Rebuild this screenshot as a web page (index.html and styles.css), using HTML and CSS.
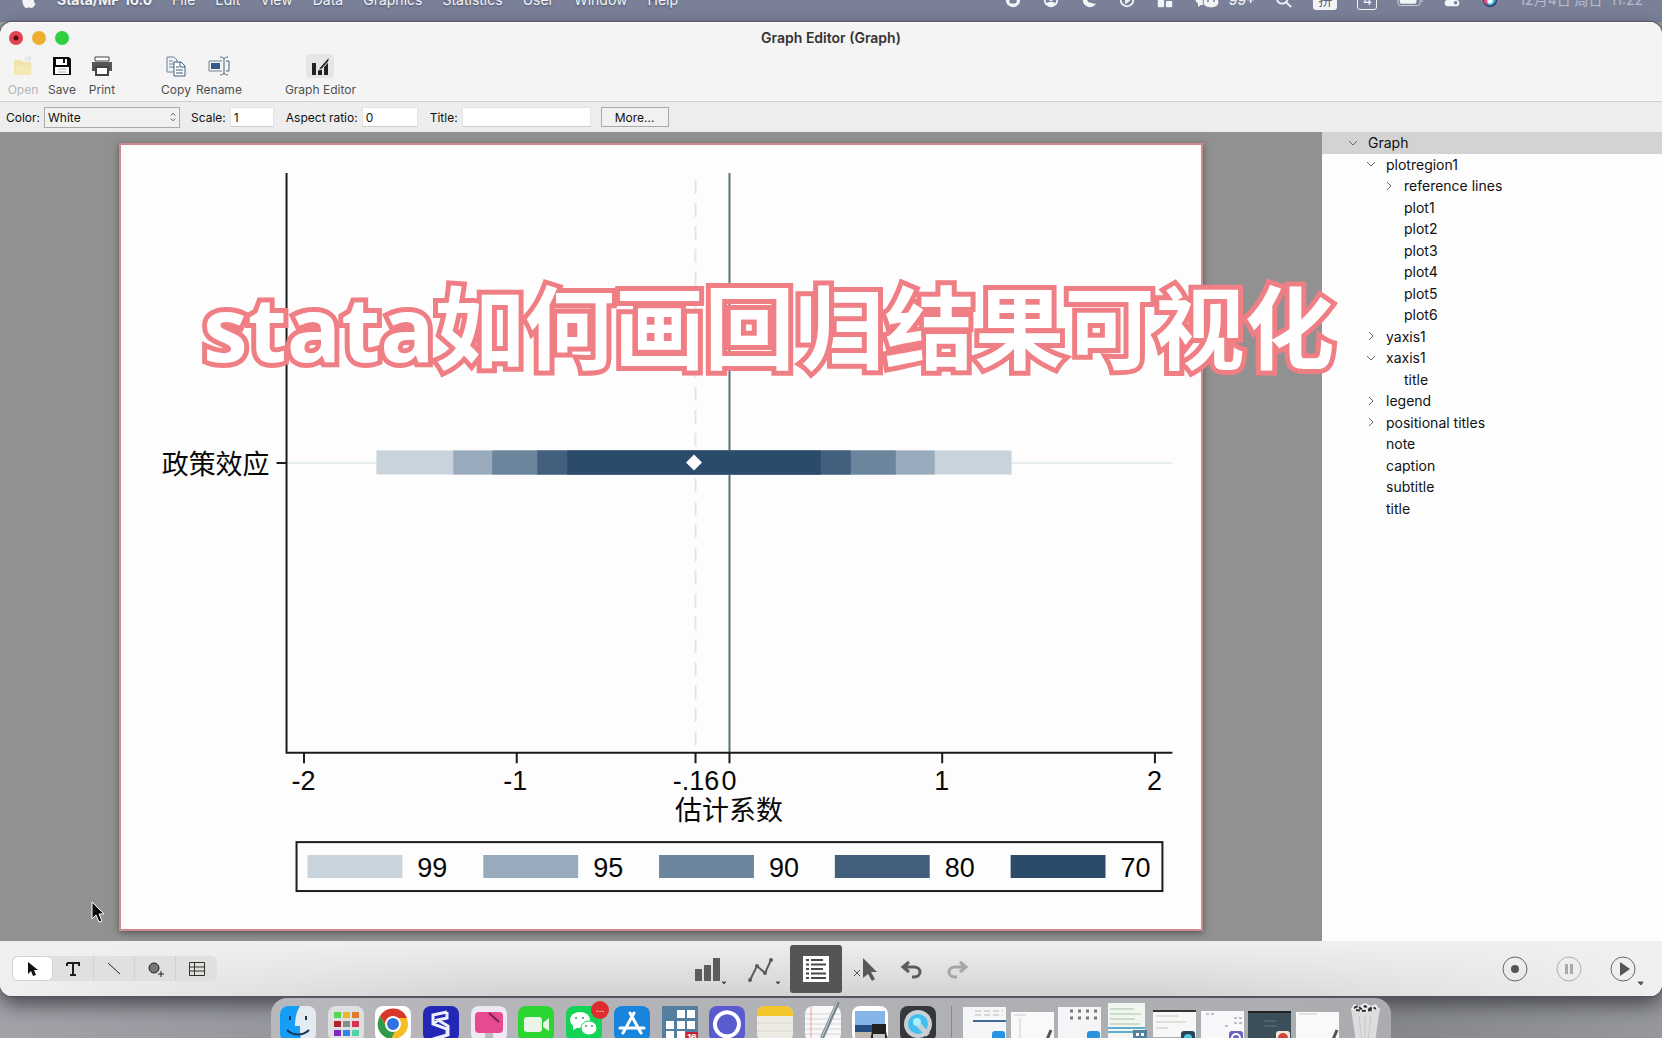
FILE: index.html
```html
<!DOCTYPE html>
<html lang="zh-CN">
<head>
<meta charset="utf-8">
<title>Graph Editor (Graph)</title>
<link rel="stylesheet" href="styles.css">
</head>
<body>
<div class="desktop">
  <header class="menubar">
    <nav class="menus">
      <svg class="apple" viewBox="0 0 18 20"><path d="M12 0c0 2-1.600 3.600-3.200 3.600C8.600 2 10 .3 12 0zM14.500 10.500c0-2 1.500-3 1.800-3.200C15 5.300 13 5 12 5c-1.200 0-2.200.7-3 .7S7.200 5 6 5C3.500 5 1.500 7 1.500 10.500 1.500 14.500 4 19 6 19c1 0 1.600-.7 3-.7s1.900.7 3 .7c1.700 0 3.500-2.700 4.300-5-1-.4-1.800-1.600-1.800-3.500z"/></svg>
      <a class="app-name" href="#">Stata/MP 16.0</a>
      <a href="#">File</a><a href="#">Edit</a><a href="#">View</a><a href="#">Data</a><a href="#">Graphics</a><a href="#">Statistics</a><a href="#">User</a><a href="#">Window</a><a href="#">Help</a>
    </nav>
    <div class="status">
      <svg viewBox="0 0 20 20"><circle cx="10" cy="10" r="8"/><rect class="cut" x="6" y="6" width="8" height="8" rx="2"/></svg>
      <svg viewBox="0 0 20 20"><circle class="line" cx="10" cy="10" r="7"/><circle cx="10" cy="8" r="3"/><path d="M4 15c2-4 10-4 12 0l-6 3z"/></svg>
      <svg viewBox="0 0 20 20"><path d="M12 2A8 8 0 1 0 18 14a7 7 0 0 1-6-12z"/><circle class="cut" cx="12" cy="9" r="4"/></svg>
      <svg viewBox="0 0 20 20"><circle class="line" cx="10" cy="10" r="7"/><path d="M8 6l6 4-6 5z"/></svg>
      <svg viewBox="0 0 20 20"><rect x="2" y="2" width="7" height="16" rx="1"/><rect x="11" y="11" width="7" height="7" rx="1"/><rect x="11" y="2" width="7" height="7" rx="1"/></svg>
      <span class="chat"><svg class="wide" viewBox="0 0 26 20"><ellipse cx="9" cy="8" rx="8" ry="7"/><path d="M4 13v4l4-3z"/><ellipse class="edge" cx="17" cy="12" rx="8" ry="6"/><circle class="cut" cx="14" cy="11" r="1"/><circle class="cut" cx="20" cy="11" r="1"/></svg><b>99+</b></span>
      <svg viewBox="0 0 20 20"><circle class="line" cx="8" cy="8" r="6"/><path class="line" d="M12 12l6 6"/></svg>
      <span class="ime">拼</span>
      <span class="ime hollow">4</span>
      <svg class="wide" viewBox="0 0 28 20"><rect class="thin" x="1" y="4" width="24" height="12" rx="3"/><rect x="3" y="5" width="18" height="9" rx="2"/><path class="thin" d="M27 8v4"/></svg>
      <svg viewBox="0 0 20 20"><rect class="thin" x="2" y="2" width="16" height="6" rx="3"/><rect x="2" y="10" width="16" height="7" rx="3"/><circle class="cut" cx="14" cy="13" r="2"/></svg>
      <svg viewBox="0 0 20 20"><circle cx="10" cy="10" r="8" fill="#303a70"/><path d="M3 12c4-6 8-6 14-3-2 7-8 10-14 3z" fill="#38b7d6"/><path d="M3 10c3-4 6-1 5 5-4 0-5-3-5-5z" fill="#e04a83"/><circle cx="10" cy="11" r="3" fill="#fff"/></svg>
      <time>12月4日 周日&nbsp; 11:22</time>
    </div>
  </header>

  <main class="window">
    <div class="titlebar">
      <div class="lights"><button class="red" aria-label="Close"></button><button class="amber" aria-label="Minimise"></button><button class="green" aria-label="Zoom"></button></div>
      <h1>Graph Editor (Graph)</h1>
    </div>
    <div class="toolbar">
      <button class="tool off"><svg viewBox="0 0 22 22"><path d="M2 5h7l2 2h8v13H2z" fill="#efe3a8"/><path d="M2 20l3-10h15l-2 10z" fill="#f3e9b4"/><path d="M12 4c2-2 4-2 6 0M18 1v4h-4" fill="none" stroke="#d3dbd8"/></svg><span>Open</span></button>
      <button class="tool"><svg viewBox="0 0 22 22"><path d="M2 2h16l2 2v16H2z" fill="#0a0a0a"/><path d="M5 4h11v6H5zM4 12h14v7H4z" fill="#fff"/><path d="M12 4h2v4h-2z" fill="#111"/><path d="M7 14h8M7 17h8" stroke="#aaa"/></svg><span>Save</span></button>
      <button class="tool"><svg viewBox="0 0 22 22"><path d="M4 2h14v4H4z" fill="#fff" stroke="#444"/><path d="M1 7h20v9H1z" fill="#565656"/><path d="M5 12h12v8H5z" fill="#fff" stroke="#444" stroke-width="2"/></svg><span>Print</span></button>
      <button class="tool gap-copy"><svg viewBox="0 0 22 22"><path d="M2 2h7l3 3v12H2z" fill="#eef1f5" stroke="#6f8297"/><path d="M4 6h4M4 9h5M4 12h5" stroke="#6f8297"/><path d="M9 7h7l4 4v10H9z" fill="#fff" stroke="#3f5a78"/><path d="M15 7v5h5M11 12h3M11 15h7M11 18h7" fill="none" stroke="#3f5a78"/></svg><span>Copy</span></button>
      <button class="tool"><svg viewBox="0 0 22 22"><path d="M14 6H1v10h13" fill="none" stroke="#6f8297"/><path d="M3 8h9v6H3z" fill="#345d8c"/><path d="M12 2c2 0 4 1 4 2 0-1 2-2 4-2M16 4v15M12 20c2 0 4-1 4-2 0 1 2 2 4 2M18 6h3v10h-3" fill="none" stroke="#49617b"/></svg><span>Rename</span></button>
      <button class="tool gap-editor"><svg class="pressed" viewBox="0 0 28 24"><path d="M6 9h4v12H6zM12 15h4v6h-4zM18 9h4v12h-4z" fill="#222"/><path d="M23 3L14 13l-2 3 4-1 7-8z" fill="#333" stroke="#eee" stroke-width="1"/></svg><span>Graph Editor</span></button>
    </div>
    <form class="options">
      <label for="color">Color:</label>
      <span class="select"><select id="color"><option>White</option></select><svg viewBox="0 0 8 12"><path d="M1 4l3-3 3 3M1 8l3 3 3-3"/></svg></span>
      <label for="scale">Scale:</label><input id="scale" class="w-scale" value="1">
      <label for="aspect">Aspect ratio:</label><input id="aspect" class="w-aspect" value="0">
      <label for="title">Title:</label><input id="title" class="w-title" value="">
      <button type="button">More...</button>
    </form>

    <div class="work">
      <section class="canvas">
        <svg class="graph" viewBox="122 144 1080 785" role="img" aria-label="估计系数">
          <path d="M287 462.500H1174" stroke="#e6eeef" stroke-width="2"/>
          <path d="M696.500 172V752" stroke="#e3e6e8" stroke-width="2" stroke-dasharray="14 9" stroke-dashoffset="16"/>
          <path d="M730.500 172V752" stroke="#56727a" stroke-width="2"/>
          <g>
            <path d="M377 450h636v24H377z" fill="#c9d3db"/>
            <path d="M454 450h482v24H454z" fill="#98aabc"/>
            <path d="M493 450h404v24H493z" fill="#6a859c"/>
            <path d="M538 450h314v24H538z" fill="#42607d"/>
            <path d="M568 450h254v24H568z" fill="#2b4b6b"/>
            <path d="M695 454l8 8-8 8-8-8z" fill="#fff"/>
          </g>
          <path class="axis" d="M287 172V752.500H1174M277 462.500h10M304.500 752v11M517.500 752v11M696.500 752v11M730.500 752v11M943.500 752v11M1156.500 752v11"/>
          <g class="ticks">
            <text x="304" y="790">-2</text><text x="516" y="790">-1</text><text x="697" y="790">-.16</text><text x="730" y="790">0</text><text x="943" y="790">1</text><text x="1156" y="790">2</text>
            <text x="730" y="820">估计系数</text><text x="216" y="473">政策效应</text>
          </g>
          <rect class="axis" x="297" y="842" width="867" height="49"/>
          <path d="M308 855h95v23h-95z" fill="#c9d3db"/><path d="M484 855h95v23h-95z" fill="#98aabc"/><path d="M660 855h95v23h-95z" fill="#6a859c"/><path d="M836 855h95v23h-95z" fill="#42607d"/><path d="M1012 855h95v23h-95z" fill="#2b4b6b"/>
          <g class="keys"><text x="418" y="877">99</text><text x="594" y="877">95</text><text x="770" y="877">90</text><text x="946" y="877">80</text><text x="1122" y="877">70</text></g>
        </svg>
      </section>
      <aside class="tree">
        <ul>
          <li class="selected l1"><svg viewBox="0 0 10 10"><path d="M1 3l4 4 4-4"/></svg>Graph</li>
          <li class="l2"><svg viewBox="0 0 10 10"><path d="M1 3l4 4 4-4"/></svg>plotregion1</li>
          <li class="l3"><svg viewBox="0 0 10 10"><path d="M3 1l4 4-4 4"/></svg>reference lines</li>
          <li class="l3 leaf">plot1</li>
          <li class="l3 leaf">plot2</li>
          <li class="l3 leaf">plot3</li>
          <li class="l3 leaf">plot4</li>
          <li class="l3 leaf">plot5</li>
          <li class="l3 leaf">plot6</li>
          <li class="l2"><svg viewBox="0 0 10 10"><path d="M3 1l4 4-4 4"/></svg>yaxis1</li>
          <li class="l2"><svg viewBox="0 0 10 10"><path d="M1 3l4 4 4-4"/></svg>xaxis1</li>
          <li class="l3 leaf">title</li>
          <li class="l2"><svg viewBox="0 0 10 10"><path d="M3 1l4 4-4 4"/></svg>legend</li>
          <li class="l2"><svg viewBox="0 0 10 10"><path d="M3 1l4 4-4 4"/></svg>positional titles</li>
          <li class="l2 leaf">note</li>
          <li class="l2 leaf">caption</li>
          <li class="l2 leaf">subtitle</li>
          <li class="l2 leaf">title</li>
        </ul>
      </aside>
    </div>

    <footer class="bottombar">
      <div class="segments">
        <button class="on" aria-label="Pointer"><svg viewBox="0 0 18 18"><path d="M4 2v12l3-3 2 5 3-1-2-5h4z" fill="#111"/></svg></button>
        <button aria-label="Add text"><svg viewBox="0 0 18 18"><path d="M3 3h12v3M3 3v3M9 3v12M6 15h6" fill="none" stroke="#1c1c1c" stroke-width="2"/></svg></button>
        <button aria-label="Add line"><svg viewBox="0 0 18 18"><path d="M3 3l12 11" stroke="#222"/></svg></button>
        <button aria-label="Add marker"><svg viewBox="0 0 18 18"><circle cx="8" cy="8" r="5" fill="#777" stroke="#222"/><path d="M12 14h6M15 11v6" stroke="#222" stroke-width="1"/></svg></button>
        <button aria-label="Grid edit"><svg viewBox="0 0 18 18"><path d="M1.500 2.500h15v13h-15zM1.500 7h15M1.500 11h15M6.500 2.500v13" fill="none" stroke="#2d3427"/></svg></button>
      </div>
      <div class="actions">
        <button class="wide" aria-label="Bars"><svg viewBox="0 0 36 28"><path d="M5 14h7v12H5zM14 10h7v16h-7zM23 3h7v23h-7z" fill="#5c5c5c"/><path d="M32 27h4l-2 2z" class="caret"/></svg></button>
        <button class="wide" aria-label="Lines"><svg viewBox="0 0 36 28"><path d="M6 25l7-14 8 7 6-13" fill="none" stroke="#5c5c5c" stroke-width="2"/><g fill="#5c5c5c"><circle cx="6" cy="25" r="2"/><circle cx="13" cy="11" r="2"/><circle cx="21" cy="18" r="2"/><circle cx="27" cy="5" r="2"/></g><path d="M32 27h4l-2 2z" class="caret"/></svg></button>
        <button class="wide active" aria-label="Object browser"><svg viewBox="0 0 36 28"><path d="M5 1h26v26H5z" fill="#fff"/><path d="M8 5h3M13 5h12M8 9.500h3M13 9.500h15M8 14h3M13 14h12M8 18.500h3M13 18.500h15M8 23h3M13 23h15" stroke="#484848" stroke-width="2"/></svg></button>
        <button aria-label="Deselect"><svg viewBox="0 0 36 28"><path d="M15 3v20l5-4 4 7 3-2-4-7h6z" fill="#585858"/><path d="M6 15l6 6M12 15l-6 6" stroke="#555"/></svg></button>
        <button aria-label="Undo"><svg viewBox="0 0 36 28"><path d="M15 7l-6 5 6 5M10 12h10c8 0 8 10 0 10h-2" fill="none" stroke="#5c5c5c" stroke-width="3"/></svg></button>
        <button aria-label="Redo"><svg viewBox="0 0 36 28"><path d="M20 7l6 5-6 5M25 12H15c-8 0-8 10 0 10h2" fill="none" stroke="#a5a5a5" stroke-width="3"/></svg></button>
      </div>
      <div class="record">
        <button aria-label="Record"><svg viewBox="0 0 30 30"><circle class="ring" cx="15" cy="15" r="12"/><circle cx="15" cy="15" r="4" fill="#555"/></svg></button>
        <button class="dim" aria-label="Pause"><svg viewBox="0 0 30 30"><circle class="ring" cx="15" cy="15" r="12"/><path d="M11 10h3v10h-3zM16 10h3v10h-3z" fill="#555"/></svg></button>
        <button aria-label="Play"><svg viewBox="0 0 30 30"><circle class="ring" cx="15" cy="15" r="12"/><path d="M12 8v14l10-7z" fill="#555"/><path d="M30 28h5l-2 3z" class="caret"/></svg></button>
      </div>
    </footer>
  </main>

  <div class="shelf">
    <div class="dock">
      <div class="apps">
        <svg viewBox="0 0 36 36"><rect width="36" height="36" rx="8" fill="#e4eaf2"/><path d="M20 0c-4 7-5 13-5 20h5c0 6 0 11 2 16H8a8 8 0 0 1-8-8V8a8 8 0 0 1 8-8z" fill="#169df5"/><path d="M10 10v4M26 10v4M7 24c6 6 16 6 22 0" fill="none" stroke="#173656" stroke-width="2"/></svg>
        <svg viewBox="0 0 36 36"><rect width="36" height="36" rx="8" fill="#dedfe0"/><path d="M6 6h7v6H6z" fill="#55d64b"/><path d="M15 6h7v6h-7z" fill="#eeb72b"/><path d="M24 6h7v6h-7z" fill="#dd7a2b"/><path d="M6 15h7v6H6z" fill="#b3212c"/><path d="M15 15h7v6h-7z" fill="#8b8b8b"/><path d="M24 15h7v6h-7z" fill="#d93257"/><path d="M6 24h7v6H6z" fill="#7b2bc1"/><path d="M15 24h7v6h-7z" fill="#2c86e8"/><path d="M24 24h7v6h-7z" fill="#54d2a3"/></svg>
        <svg viewBox="0 0 36 36"><rect width="36" height="36" rx="8" fill="#fff"/><circle cx="18" cy="18" r="15" fill="#f6bd24"/><path d="M5 10a15 15 0 0 1 27 2H18l-6 9z" fill="#d73a2c"/><path d="M5 10l7 12 8 3-4 8A15 15 0 0 1 5 10z" fill="#30994b"/><circle cx="18" cy="18" r="7" fill="#2e71e0" stroke="#fff" stroke-width="2"/></svg>
        <svg viewBox="0 0 36 36"><rect width="36" height="36" rx="8" fill="#2228b5"/><path d="M24 6L10 9v9l14 5v6l-14 4M10 18l4-3M24 6v6l-9 2 10 6v9l-13 4" fill="none" stroke="#eef" stroke-width="3"/></svg>
        <svg viewBox="0 0 36 36"><rect width="36" height="36" rx="8" fill="#eee8f5"/><rect x="4" y="6" width="28" height="21" rx="4" fill="#e74a91"/><path d="M18 7l10 9" stroke="#742052" stroke-width="2"/><path d="M14 27h8v9h-8z" fill="#bbb"/></svg>
        <svg viewBox="0 0 36 36"><rect width="36" height="36" rx="8" fill="#2bd633"/><rect x="6" y="11" width="18" height="15" rx="3" fill="#eaf5e8"/><path d="M25 17l6-5v13l-6-4z" fill="#eaf5e8"/></svg>
        <span class="with-badge"><svg viewBox="0 0 36 36"><rect width="36" height="36" rx="8" fill="#13d457"/><ellipse cx="14" cy="14" rx="10" ry="8" fill="#fff"/><path d="M7 19v5l6-3z" fill="#fff"/><ellipse cx="23" cy="22" rx="8" ry="7" fill="#fff" stroke="#13d457"/><g fill="#289d54"><circle cx="10" cy="12" r="1"/><circle cx="17" cy="12" r="1"/><circle cx="20" cy="20" r="1"/><circle cx="26" cy="20" r="1"/></g></svg><i class="badge">…</i></span>
        <svg viewBox="0 0 36 36"><rect width="36" height="36" rx="8" fill="#1884dc"/><path d="M20 7L9 27M16 7l11 20M6 22h24" stroke="#fff" stroke-width="3" stroke-linecap="round"/></svg>
        <svg viewBox="0 0 36 36"><path d="M0 0h36v36H0z" fill="#557f9f"/><path d="M15 4h8v8h-8zM25 4h8v8h-8zM4 15h8v8H4zM15 15h8v8h-8zM25 15h8v8h-8zM4 25h8v8H4zM15 25h8v8h-8z" fill="#fff"/><path d="M24 26h12v10H24z" fill="#c82036"/><text x="30" y="35" class="mini">16</text></svg>
        <svg viewBox="0 0 36 36"><rect width="36" height="36" rx="8" fill="#5b5bd0"/><path d="M28 25a12 12 0 1 1 2-7c0 4-2 8-4 8" fill="none" stroke="#fff" stroke-width="4"/></svg>
        <svg viewBox="0 0 36 36"><rect width="36" height="36" rx="8" fill="#edeae3"/><path d="M0 10V8a8 8 0 0 1 8-8h20a8 8 0 0 1 8 8v2z" fill="#f2c52c"/><path d="M0 17h36M0 25h36" stroke="#d7d3cc"/></svg>
        <svg class="spill" viewBox="0 0 36 36"><rect width="36" height="36" rx="8" fill="#f8f8f8"/><path d="M0 8h36M0 13h36M0 18h36M0 23h36M0 28h36" stroke="#d4d4d4"/><path d="M6 0v36" stroke="#e9a4a4"/><path d="M33-4L17 32" stroke="#7b8790" stroke-width="4"/><path d="M32-4L17 31" stroke="#cbd3d8"/></svg>
        <svg viewBox="0 0 36 36"><rect width="36" height="36" rx="8" fill="#fff"/><path d="M3 5h30v14H3z" fill="#85b4e8"/><path d="M3 19h30v7H3z" fill="#244d80"/><path d="M3 26h30v10H3z" fill="#bdb8a9"/><path d="M20 18h14v7l2 11H18l2-11z" fill="#222"/><path d="M21 28h12v8H21z" fill="#c5c5c5"/></svg>
        <svg viewBox="0 0 36 36"><rect width="36" height="36" rx="8" fill="#353739"/><circle cx="18" cy="18" r="12" fill="#41bfee" stroke="#c8d0d6" stroke-width="4"/><path d="M18 18l10 11" stroke="#c8d0d6" stroke-width="5"/><circle cx="17" cy="16" r="4" fill="#abf0ff"/></svg>
      </div>
      <div class="thumbs">
        <svg viewBox="0 0 43 36"><path d="M0 1h43v35H0z" fill="#f5f6f8"/><path d="M10 15h33" stroke="#416b9e" stroke-width="2"/><path d="M12 5h28M12 9h28" stroke="#bbb" stroke-dasharray="6 3"/><rect x="29" y="25" width="13" height="13" rx="3" fill="#2694e2"/></svg>
        <svg viewBox="0 0 43 36"><path d="M0 6h43v30H0z" fill="#f9f9fa"/><path d="M3 9h12M9 12v20" stroke="#ccc"/><path d="M40 24l-5 12" stroke="#555" stroke-width="3"/></svg>
        <svg viewBox="0 0 43 36"><path d="M0 1h43v35H0z" fill="#f5f5f7"/><path d="M12 5h28M12 12h28" stroke="#777" stroke-width="3" stroke-dasharray="3 5"/><rect x="29" y="25" width="13" height="13" rx="3" fill="#2694e2"/></svg>
        <svg viewBox="0 0 43 36"><path d="M2-3h37v39H2z" fill="#f1f6f1"/><path d="M4 3h24M4 8h31M4 13h25M4 18h30" stroke="#a7c49d"/><path d="M2 22h37M2 26h37" stroke="#5eaed0" stroke-width="2"/><path d="M27 24h14v12H27z" fill="#557f9f"/><path d="M30 27h3v3h-3zM35 27h3v3h-3zM30 32h3v3h-3zM35 32h3v3h-3z" fill="#fff"/></svg>
        <svg viewBox="0 0 43 36"><path d="M0 5h43v26H0z" fill="#f7f7f7"/><path d="M0 5h43" stroke="#353535" stroke-width="2"/><path d="M3 10h22M3 16h30M3 22h12" stroke="#bfc9b8"/><rect x="28" y="25" width="14" height="14" rx="3" fill="#27445a"/><circle cx="35" cy="32" r="4" fill="#51c4e8"/></svg>
        <svg viewBox="0 0 43 36"><path d="M0 5h43v31H0z" fill="#f8f8fa"/><path d="M33 12h8M33 17h8M24 20h3M5 8h10" stroke="#888" stroke-dasharray="3 2"/><rect x="28" y="25" width="14" height="14" rx="3" fill="#6865be"/><circle cx="35" cy="32" r="4" fill="none" stroke="#fff" stroke-width="2"/></svg>
        <svg viewBox="0 0 43 36"><path d="M0 6h43v26H0z" fill="#3c4e59"/><path d="M0 6h43" stroke="#222" stroke-width="2"/><path d="M16 15h12M16 20h12" stroke="#647680"/><rect x="28" y="25" width="14" height="14" rx="3" fill="#f4e7d8"/><circle cx="35" cy="32" r="5" fill="#d0433b"/></svg>
        <svg viewBox="0 0 43 36"><path d="M0 6h43v30H0z" fill="#f9f9fa"/><path d="M3 8h18" stroke="#ccc"/><path d="M41 24l-5 12" stroke="#555" stroke-width="3"/></svg>
      </div>
      <svg class="trash" viewBox="0 0 34 40"><path d="M3 6h29l-5 34H8z" fill="#dcdddd"/><path d="M3 7l3-5 5 2 6-3 6 3 5-2 3 5-14 4z" fill="#eee"/><path d="M6 6l4-2 3 3 4-3 4 3 4-2 3 2M8 8l7 1 9-1" fill="none" stroke="#333" stroke-width="2" stroke-dasharray="4 2"/><path d="M11 14l3 24M23 14l-3 24M17 14v24" stroke="#c6c8c8"/></svg>
    </div>
  </div>

  <p class="caption">stata如何画回归结果可视化</p>
  <svg class="cursor" viewBox="0 0 14 22"><path d="M1 1v17l4-4 3 7 3-1-3-7h5z" fill="#0a0a0a" stroke="#fff"/></svg>
</div>
</body>
</html>
```

FILE: styles.css
```css
* { box-sizing: border-box; }
body { margin: 0; font-family: Inter, "Noto Sans CJK SC", sans-serif; font-size: 12px; color: #1d1d1d; }
button { margin: 0; padding: 0; border: 0; background: none; font: inherit; color: inherit; }
svg { display: block; flex: none; }
.desktop { position: relative; display: flex; flex-direction: column; height: 100vh; min-height: 640px; overflow: hidden; background: linear-gradient(to right, #a2a2a9, #808388 50%, #85878b 84%, #96989c); }

.menubar { flex: none; display: flex; justify-content: space-between; height: 22px; padding: 0 19px 0 21px; background: #798098; color: #f3f4f6; font-size: 14px; line-height: 20px; overflow: hidden; }
.menus, .status { display: flex; gap: 20px; margin-top: -10px; height: 20px; white-space: nowrap; }
.menus a { color: inherit; text-decoration: none; text-shadow: 0 1px 2px #4d5369; }
.menus .app-name { font-weight: 700; }
.apple { width: 16px; height: 20px; fill: #f3f4f6; }
.status svg { width: 18px; height: 20px; fill: #f3f4f6; }
.status .wide { width: 26px; }
.status .cut { fill: #798098; }
.status .edge { stroke: #798098; }
.status .line { fill: none; stroke: #f3f4f6; stroke-width: 2; }
.status .thin { fill: none; stroke: #d7d9e0; }
.chat { display: flex; gap: 8px; }
.chat b { font-weight: 500; }
.ime { width: 24px; height: 20px; border-radius: 3px; background: #f3f4f6; color: #5c6278; text-align: center; }
.ime.hollow { width: 20px; background: none; color: #f3f4f6; border: 1px solid #f3f4f6; line-height: 18px; }
.status time { color: #b9bdca; }

.window { flex: 1; min-height: 0; display: flex; flex-direction: column; border-radius: 12px; overflow: hidden; background: #f4f4f4; box-shadow: 0 0 1px 1px #55565c, 0 8px 20px #44454c; z-index: 1; }
.titlebar { display: grid; grid-template-columns: 1fr auto 1fr; align-items: center; height: 31px; padding: 0 9px; border-top: 1px solid #fff; }
.titlebar h1 { margin: 0; font-size: 14px; font-weight: 600; line-height: 20px; color: #333; }
.lights { display: flex; gap: 9px; }
.lights button { width: 14px; height: 14px; border-radius: 50%; }
.red { background: radial-gradient(circle, #5a0d12 2px, #e0444e 3px); }
.amber { background: #eeb030; }
.green { background: #2fcf41; }

.toolbar { display: flex; height: 49px; padding: 1px 0 0 4px; border-bottom: 1px solid #d0d0d0; }
.tool { display: flex; flex-direction: column; align-items: center; gap: 3px; min-width: 40px; height: 44px; color: #505050; line-height: 18px; }
.tool svg { width: 22px; height: 24px; }
.tool .pressed { width: 28px; border-radius: 4px; background: #e6e6e6; }
.tool.off { color: #b5b5b5; min-width: 38px; }
.gap-copy { margin-left: 34px; }
.gap-editor { margin-left: 43px; }

.options { display: flex; align-items: center; height: 30px; padding: 0 6px; background: #ededed; color: #111; }
.options label { margin-right: 4px; }
.options input { height: 20px; padding: 0 3px; border: 1px solid #e4e4e4; border-bottom-color: #ccc; background: #fff; font: inherit; color: inherit; margin-right: 12px; }
.select { display: grid; align-items: center; width: 136px; margin-right: 11px; }
.select > * { grid-area: 1 / 1; }
.select select { appearance: none; width: 100%; height: 21px; padding: 0 3px; border: 1px solid #a9a9a9; border-radius: 0; background: #f1f1f1; font: inherit; color: inherit; }
.select svg { justify-self: end; width: 6px; height: 10px; margin-right: 4px; fill: none; stroke: #222; pointer-events: none; }
.w-scale { width: 44px; }
.w-aspect { width: 56px; }
.w-title { width: 129px; }
.options button { width: 68px; height: 20px; margin-left: -2px; border: 1px solid #aaa; background: #f1f1f1; }

.work { flex: 1; min-height: 0; display: grid; grid-template-columns: minmax(0, 1fr) 340px; }
.canvas { display: flex; justify-content: center; min-height: 0; padding: 11px 0 10px; background: #919191; }
.graph { height: 100%; max-width: 100%; aspect-ratio: 1080 / 785; background: #fdfdfd; border: 2px solid #cf8a90; box-shadow: 0 2px 7px #555; }
.axis { fill: none; stroke: #1c1c1c; stroke-width: 2; }
.ticks, .keys { font-family: "Liberation Sans", "Noto Sans CJK SC", sans-serif; font-size: 27px; fill: #080808; }
.ticks { text-anchor: middle; }
.tree { background: #fdfdfd; overflow: hidden; }
.tree ul { display: grid; grid-template-rows: repeat(18, 1fr); height: 387px; margin: 0; padding: 0; list-style: none; font-size: 14px; color: #111; }
.tree li { display: flex; align-items: center; gap: 10px; }
.tree svg { width: 10px; height: 10px; fill: none; stroke: #666; stroke-width: 1; }
.tree .selected { background: #d3d3d3; }
.l1 { padding-left: 26px; }
.l2 { padding-left: 44px; }
.l3 { padding-left: 62px; }
.leaf::before { content: ""; width: 10px; }

.bottombar { display: grid; grid-template-columns: 1fr auto 1fr; align-items: center; height: 55px; flex: none; padding: 0 20px 0 12px; background: linear-gradient(to right, #f0f0f0, #f0f0f000 30%, #f0f0f000 70%, #f0f0f0), linear-gradient(#efefef, #d3d3d3); }
.segments { justify-self: start; display: flex; height: 25px; border-radius: 6px; background: #e0e0e0; }
.segments button { display: grid; place-items: center; width: 41px; border-right: 1px solid #d2d2d2; }
.segments button:last-child { border: 0; }
.segments .on { border: 1px solid #d2d2d2; border-radius: 6px; background: #fff; }
.segments svg { width: 18px; height: 18px; }
.actions { display: flex; align-items: center; margin-left: 8px; }
.actions button { display: grid; place-items: center; width: 46px; height: 48px; border-radius: 3px; }
.actions .wide { width: 54px; }
.actions svg { width: 36px; height: 28px; overflow: visible; }
.actions .active { background: #555; width: 52px; margin: 0 1px; }
.caret { fill: #555; stroke: #555; }
.record { justify-self: end; display: flex; gap: 24px; margin-right: 4px; }
.record svg { width: 30px; height: 30px; overflow: visible; }
.ring { fill: none; stroke: #666; stroke-width: 1; }
.dim { opacity: .45; }

.shelf { flex: none; display: flex; justify-content: center; height: 42px; }
.dock { display: flex; width: 1120px; max-width: 100%; margin-top: 2px; padding: 8px 9px 0; border-radius: 16px 16px 0 0; background: linear-gradient(to right, #b8b7bb, #b0b1b5 60%, #aaacb0); z-index: 2; overflow: hidden; }
.apps { flex: 1; display: flex; justify-content: space-between; padding-right: 15px; border-right: 1px solid #85878a; }
.apps svg { width: 36px; height: 36px; }
.apps .spill, .thumbs svg { overflow: visible; }
.mini { font: 700 9px Inter, sans-serif; fill: #fff; text-anchor: middle; }
.with-badge { position: relative; }
.badge { position: absolute; top: -5px; right: -7px; width: 18px; height: 18px; border-radius: 50%; background: #df2d2f; color: #fff; font-style: normal; font-size: 10px; line-height: 14px; text-align: center; }
.thumbs { width: 376px; display: flex; justify-content: space-between; margin: 0 9px 0 11px; }
.thumbs svg { width: 43px; height: 36px; }
.trash { width: 34px; height: 40px; margin-top: -4px; }

.caption { position: absolute; top: 262px; left: 203px; margin: 0; font-family: "Open Sans", "Noto Sans CJK SC", sans-serif; font-size: 90px; font-weight: 700; line-height: 130px; white-space: nowrap; color: #fff; -webkit-text-stroke: 10px #ef7f84; paint-order: stroke fill; z-index: 3; }
.cursor { position: absolute; top: 901px; left: 91px; width: 14px; height: 22px; z-index: 3; }
```
